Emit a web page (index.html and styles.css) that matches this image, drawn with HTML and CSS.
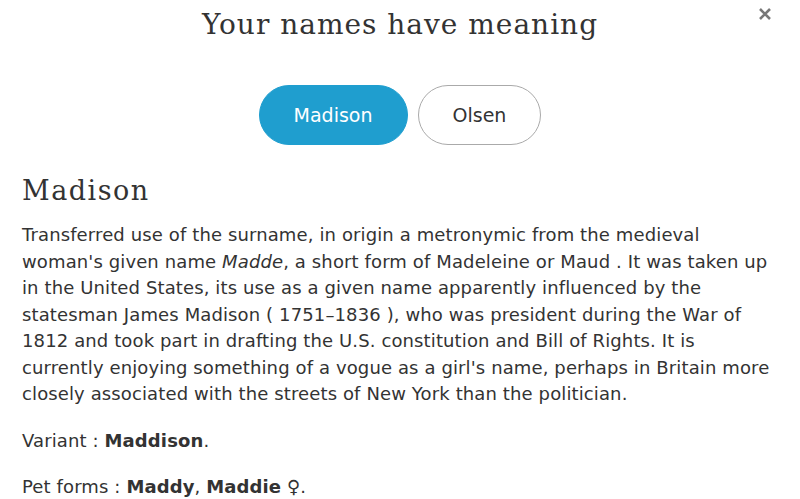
FILE: index.html
```html
<!DOCTYPE html>
<html>
<head>
<meta charset="utf-8">
<link rel="stylesheet" href="styles.css">
</head>
<body>
<div class="modal">
  <button class="close" aria-label="Close">
    <svg width="14" height="14" viewBox="0 0 14 14"><path d="M2 2L12 12M12 2L2 12" stroke="#777" stroke-width="2.6" stroke-linecap="butt"/></svg>
  </button>
  <h1 class="title">Your names have meaning</h1>
  <div class="tabs">
    <button class="tab active">Madison</button>
    <button class="tab">Olsen</button>
  </div>
  <section class="entry">
    <h2 class="name">Madison</h2>
    <p class="desc">Transferred use of the surname, in origin a metronymic from the medieval woman's given name <em>Madde</em>, a short form of Madeleine or Maud . It was taken up in the United States, its use as a given name apparently influenced by the statesman James Madison ( 1751–1836 ), who was president during the War of 1812 and took part in drafting the U.S. constitution and Bill of Rights. It is currently enjoying something of a vogue as a girl's name, perhaps in Britain more closely associated with the streets of New York than the politician.</p>
    <p class="meta">Variant : <b>Maddison</b>.</p>
    <p class="meta">Pet forms : <b>Maddy</b>, <b>Maddie</b> ♀.</p>
  </section>
</div>
</body>
</html>
```

FILE: styles.css
```css
html, body {
  margin: 0;
  padding: 0;
  background: #fff;
}
.modal {
  position: relative;
  padding: 0 22px;
  color: #333;
}
.close {
  position: absolute;
  top: 7px;
  right: 28px;
  border: 0;
  background: none;
  padding: 0;
  cursor: pointer;
}
.title {
  margin: 0;
  padding-top: 6px;
  text-align: center;
  font-family: "DejaVu Serif", serif;
  font-weight: normal;
  font-size: 28px;
  letter-spacing: 1px;
  line-height: 38px;
  color: #333;
}
.tabs {
  display: flex;
  justify-content: center;
  gap: 10px;
  margin-top: 41px;
}
.tab {
  height: 60px;
  padding: 0 34px;
  border-radius: 30px;
  border: 1px solid #aaa;
  background: #fff;
  color: #333;
  font-family: "DejaVu Sans", Verdana, sans-serif;
  font-size: 19px;
}
.tab.active {
  background: #1f9ecf;
  border-color: #1f9ecf;
  color: #fff;
}
.name {
  margin: 28px 0 0;
  font-family: "DejaVu Serif", serif;
  font-weight: normal;
  font-size: 27px;
  letter-spacing: 1.5px;
  line-height: 36px;
  color: #333;
}
.desc, .meta {
  font-family: "DejaVu Sans", Verdana, sans-serif;
  font-size: 18px;
  letter-spacing: 0.12px;
  line-height: 26.5px;
  margin: 13px 0 0;
  color: #333;
}
.meta {
  margin-top: 20px;
}
```
